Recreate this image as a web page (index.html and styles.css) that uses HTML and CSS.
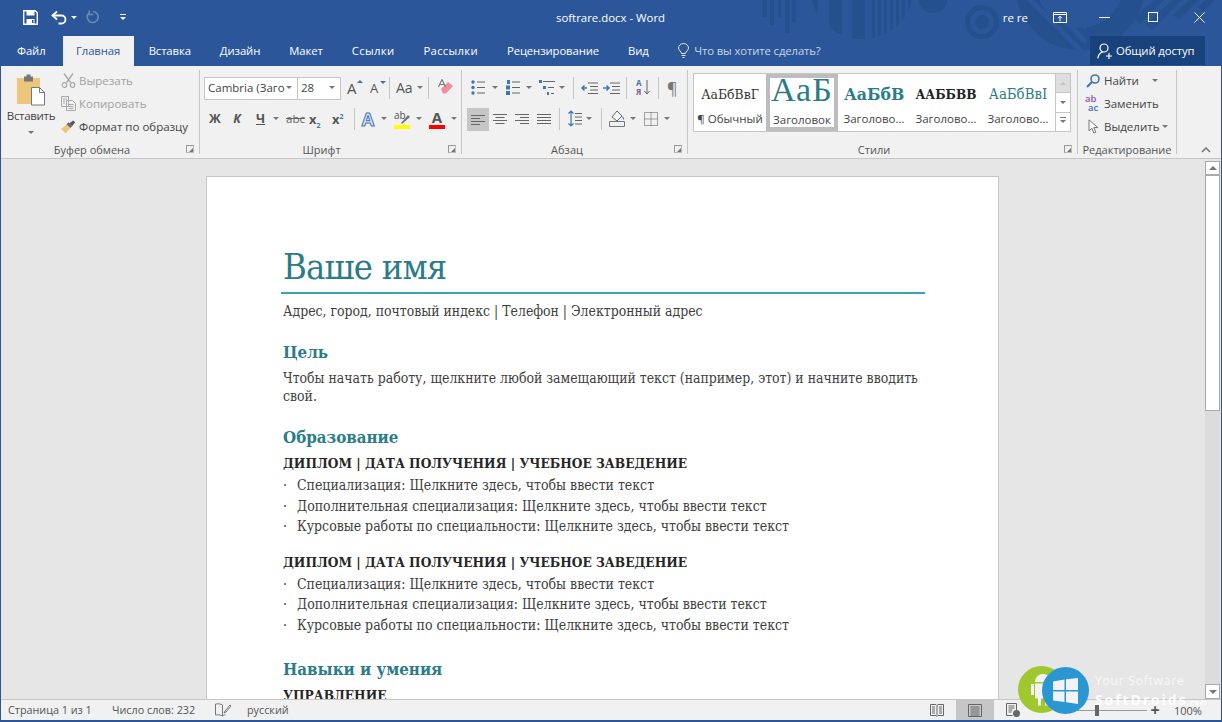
FILE: index.html
```html
<!DOCTYPE html>
<html lang="ru">
<head>
<meta charset="utf-8">
<title>softrare.docx - Word</title>
<link rel="stylesheet" href="styles.css">
</head>
<body>
<div class="window">
  <svg class="pattern" width="1222" height="66" viewBox="0 0 1222 66" aria-hidden="true">
    <defs>
      <clipPath id="semi"><circle cx="862" cy="-13" r="52"/></clipPath>
      <clipPath id="arcL"><path d="M1000 0H1086V66H1000Z"/></clipPath>
    </defs>
    <g fill="#25508e">
      <path d="M763 0h4v17h-4zM770 0h4v25h-4zM778 0h3v17h-3zM785 0h4v33h-4zM792 0h4v22h-4z"/>
      <g clip-path="url(#semi)">
        <path d="M811 0h7v20h-7zM829 0h13v40h-13zM852 0h13v40h-13zM872 0h3v40h-3zM878 0h3v40h-3zM884 0h3v40h-3zM890 0h3v40h-3zM896 0h3v40h-3zM902 0h3v40h-3zM908 0h3v40h-3z"/>
      </g>
      <path d="M919 0h28a14 13 0 0 1-28 0z"/>
      <path fill-rule="evenodd" d="M982 5a17 17 0 1 0 .01 0zM982 10a12 12 0 1 1-.01 0z"/>
      <circle cx="982" cy="22" r="7"/>
      <path d="M1155 0h9l-24 24-6-6zM1172 0h10l-30 30-6-6zM1190 0h9l-20 20-6-5zM1206 0h9l-12 12-5-5z"/>
    </g>
    <circle cx="1080" cy="-15" r="54" fill="none" stroke="#25508e" stroke-width="22"/>
    <g clip-path="url(#arcL)" stroke="#2b579a" stroke-width="5">
      <path d="M1020 -10l60 60M1034 -10l60 60M1048 -10l52 52"/>
    </g>
  </svg>

  <header class="titlebar">
    <div class="qat">
      <svg class="ic-save" width="15" height="15" viewBox="0 0 15 15"><path d="M0.7 0.7h11.6l2 2v11.6h-13.6z" fill="none" stroke="#fff" stroke-width="1.4"/><path d="M3.5 1h8v4.5h-8z" fill="#fff"/><path d="M3.5 9h8v5h-8z" fill="#fff"/><path d="M9 10h1.5v3h-1.5z" fill="#2b579a"/></svg>
      <svg class="ic-undo" width="16" height="15" viewBox="0 0 16 15"><path d="M1.5 5.5h9a4 4 0 0 1 0 8h-3" fill="none" stroke="#fff" stroke-width="1.8"/><path d="M6 1.5l-4.5 4 4.5 4" fill="none" stroke="#fff" stroke-width="1.8"/></svg>
      <span class="caret white ml-qat1"></span>
      <svg class="ic-redo" width="14" height="14" viewBox="0 0 14 14"><path d="M3.2 2.8a5.5 5.5 0 1 0 3.8-1.3" fill="none" stroke="#6d8bb9" stroke-width="1.6"/><path d="M3.2 0.5v4h4" fill="none" stroke="#6d8bb9" stroke-width="1.5"/></svg>
      <span class="qat-more"></span>
    </div>
    <div class="doc-title">softrare.docx - Word</div>
    <div class="winctl">
      <span class="user">re re</span>
      <svg class="ic-mode" width="14" height="11" viewBox="0 0 14 11"><path d="M.5.5h13v10H.5zM.5 2.5h13M7 9.5V4.5M5 6.2l2-2 2 2" fill="none" stroke="#fff"/></svg>
      <span class="ctl-min"></span>
      <span class="ctl-max"></span>
      <svg class="ctl-close" width="11" height="11" viewBox="0 0 11 11"><path d="M.5.5l10 10M10.500.5l-10 10" stroke="#fff" fill="none"/></svg>
    </div>
  </header>

  <nav class="tabs">
    <span class="tab t-file">Файл</span>
    <span class="tab active">Главная</span>
    <span class="tab t-ins">Вставка</span>
    <span class="tab">Дизайн</span>
    <span class="tab">Макет</span>
    <span class="tab t-wide">Ссылки</span>
    <span class="tab t-wider">Рассылки</span>
    <span class="tab">Рецензирование</span>
    <span class="tab">Вид</span>
    <svg class="ic-bulb" width="11" height="15" viewBox="0 0 11 15"><path d="M3.500 10.500c0-2-3-3-3-5.500a5 4.500 0 0 1 10 0c0 2.500-3 3.500-3 5.500zM3.500 12.500h4M4.500 14.500h2" fill="none" stroke="#dfe6f1"/></svg>
    <span class="tell">Что вы хотите сделать?</span>
    <span class="share">
      <svg width="16" height="16" viewBox="0 0 16 16"><circle cx="7" cy="5" r="4" fill="none" stroke="#fff" stroke-width="1.2"/><path d="M.8 15.500c.5-4 2.500-6 5-6.500M9 13h6M12 10v6" fill="none" stroke="#fff" stroke-width="1.2"/></svg>
      Общий доступ
    </span>
  </nav>

  <section class="ribbon">
    <div class="group g-clip">
      <div class="clip-body">
        <div class="paste">
          <svg width="30" height="32" viewBox="0 0 30 32"><path d="M1 4h23v26H1z" fill="#ecc67b"/><path d="M8 2.500h9v5H8z" fill="#777"/><path d="M10.500 .5h4v3h-4z" fill="#777"/><path d="M15.500 13.500h8l5 5v12.500h-13z" fill="#fff" stroke="#777"/><path d="M23.500 13.500v5h5" fill="none" stroke="#777"/></svg>
          <span class="paste-text">Вставить</span>
          <span class="caret"></span>
        </div>
        <div class="clip-list">
          <div class="clip-row dim">
            <svg width="15" height="15" viewBox="0 0 15 15"><path d="M3 .5l6.500 9M12 .5l-6.500 9" stroke="#a9a9a9" stroke-width="1.300" fill="none"/><circle cx="3.500" cy="12" r="2.300" fill="none" stroke="#a9a9a9" stroke-width="1.200"/><circle cx="11.500" cy="12" r="2.300" fill="none" stroke="#a9a9a9" stroke-width="1.200"/></svg>
            <span>Вырезать</span>
          </div>
          <div class="clip-row dim">
            <svg width="15" height="15" viewBox="0 0 15 15"><path d="M.5.500h7v10h-7zM5.500 4.500h6l3 3v7h-9zM2 3h4M2 5h2M2 7h2M7.500 8.500h5M7.500 10.500h5M7.500 12.500h5" fill="#f1f1f1" stroke="#a9a9a9"/></svg>
            <span>Копировать</span>
          </div>
          <div class="clip-row">
            <svg width="15" height="14" viewBox="0 0 16 14"><path d="M0 9l6-5 4 4-5 6z" fill="#ecc67b"/><path d="M6 4l2-2 4 4-2 2z" fill="#666"/><path d="M9 3l4-3 2 2-3 4z" fill="#555"/></svg>
            <span>Формат по образцу</span>
          </div>
        </div>
      </div>
      <div class="glabel gl-clip">Буфер обмена</div>
      <span class="launcher"></span>
    </div>

    <div class="group g-font">
      <div class="row r1">
        <span class="combo c-font">Cambria (Заго<span class="caret"></span></span><span class="combo c-size">28<span class="caret"></span></span>
        <span class="letter big m-a1">A<i class="up"></i></span>
        <span class="letter small-a m-a2">A<i class="down"></i></span>
        <span class="sep m-s1"></span>
        <span class="aa">Aa</span><span class="caret m4"></span>
        <span class="sep m-s2"></span>
        <svg class="m-er" width="16" height="17" viewBox="0 0 16 17"><path d="M3 10l7-7 5 4-7 7.500H5z" fill="#ef8e9f"/><path d="M.5 8L4 .5 7.500 8M1.800 5.500h4.500" fill="none" stroke="#777" stroke-width="1.100"/></svg>
      </div>
      <div class="row r2">
        <span class="fmt f-b">Ж</span>
        <span class="fmt f-i">К</span>
        <span class="fmt f-u">Ч</span><span class="caret m-car1"></span>
        <span class="abc">abc</span>
        <span class="scr m-x1">x<sub>2</sub></span>
        <span class="scr m-x2">x<sup>2</sup></span>
        <span class="sep m-s3"></span>
        <span class="effect">A</span><span class="caret m5"></span>
        <span class="hl">
          <svg width="16" height="17" viewBox="0 0 16 17"><path d="M7 11l7-8 2 2-8 7z" fill="#777"/><rect y="13" width="16" height="4" fill="#ffff00"/></svg>
          <b>ab</b>
        </span><span class="caret m-car2"></span>
        <span class="color">A<i></i></span><span class="caret m-car3"></span>
      </div>
      <div class="glabel gl-font">Шрифт</div>
      <span class="launcher"></span>
    </div>

    <div class="group g-para">
      <div class="row r1">
        <svg class="m-p1" width="14" height="15" viewBox="0 0 14 15"><g fill="#3f75b5"><circle cx="2" cy="2" r="1.700"/><circle cx="2" cy="7.500" r="1.700"/><circle cx="2" cy="13" r="1.700"/></g><path d="M6 2h8M6 7.500h8M6 13h8" stroke="#666"/></svg>
        <span class="caret m-p2"></span>
        <svg class="m-p3" width="14" height="15" viewBox="0 0 14 15"><g fill="#3f75b5"><rect x="1" y="0" width="3" height="4"/><rect x="0" y="5.500" width="4" height="4"/><rect x="0" y="11" width="4" height="4"/></g><path d="M6 2h8M6 7.500h8M6 13h8" stroke="#666"/></svg>
        <span class="caret m-p4"></span>
        <svg class="m-p5" width="16" height="15" viewBox="0 0 16 15"><g fill="#3f75b5"><rect x="0" y="0" width="3" height="3"/><rect x="4" y="6" width="3" height="3"/><rect x="8" y="12" width="2" height="3"/></g><path d="M4 1.500h12M9 7.500h6M12 13.500h3" stroke="#666"/></svg>
        <span class="caret m-p6"></span>
        <span class="sep m-p7"></span>
        <svg class="m-p8" width="17" height="14" viewBox="0 0 17 14"><path d="M7 2h10M9 5.500h8M9 9h8M7 12.500h10" stroke="#666"/><path d="M6 7H1M3.500 4.500L1 7l2.500 2.500" stroke="#3f75b5" stroke-width="1.500" fill="none"/></svg>
        <svg class="m-p9" width="17" height="14" viewBox="0 0 17 14"><path d="M7 2h10M9 5.500h8M9 9h8M7 12.500h10" stroke="#666"/><path d="M0 7h6M3.500 4.500L6 7 3.500 9.500" stroke="#3f75b5" stroke-width="1.500" fill="none"/></svg>
        <span class="sep m-p10"></span>
        <span class="sort m-p11"><b class="sort-a">А</b><b class="sort-y">Я</b>
          <svg width="6" height="15" viewBox="0 0 6 15"><path d="M3 0v14M.5 11L3 14l2.500-3" fill="none" stroke="#666"/></svg>
        </span>
        <span class="sep m-p12"></span>
        <span class="pil">¶</span>
      </div>
      <div class="row r2">
        <span class="al-sel">
          <svg width="14" height="10" viewBox="0 0 14 10"><path d="M0 .5h14M0 3.500h9M0 6.500h14M0 9.500h9" stroke="#666"/></svg>
        </span>
        <svg class="m-al1" width="14" height="10" viewBox="0 0 14 10"><path d="M0 .5h14M2.500 3.500h9M0 6.500h14M2.500 9.500h9" stroke="#666"/></svg>
        <svg class="m-al2" width="14" height="10" viewBox="0 0 14 10"><path d="M0 .5h14M5 3.500h9M0 6.500h14M5 9.500h9" stroke="#666"/></svg>
        <svg class="m-al2" width="14" height="10" viewBox="0 0 14 10"><path d="M0 .5h14M0 3.500h14M0 6.500h14M0 9.500h14" stroke="#666"/></svg>
        <span class="sep m-al3"></span>
        <svg class="m-al4" width="14" height="17" viewBox="0 0 14 17"><path d="M3 1v15M.5 3.500L3 1l2.500 2.500M.5 13.500L3 16l2.500-2.500" fill="none" stroke="#3f75b5" stroke-width="1.200"/><path d="M7 3.500h7M7 7h7M7 10.500h7M7 14h7" stroke="#666"/></svg>
        <span class="caret m-al5"></span>
        <span class="sep m-al6"></span>
        <svg class="m-al7" width="16" height="17" viewBox="0 0 16 17"><path d="M3 7l5-6 5 5-5 5z" fill="#f6f6f6" stroke="#666"/><path d="M13 6c2 1 2.500 3 2 4-1-1-1.500-2-2-4z" fill="#3f75b5"/><path d="M.5 11.500h15v5H.5z" fill="none" stroke="#777"/></svg>
        <span class="caret m-al8"></span>
        <svg class="m-al9" width="14" height="14" viewBox="0 0 14 14"><path d="M.5.500h13v13H.5zM7 .5v13M.5 7h13" fill="none" stroke="#555" stroke-dasharray="1 1"/></svg>
        <span class="caret m-al10"></span>
      </div>
      <div class="glabel gl-para">Абзац</div>
      <span class="launcher"></span>
    </div>

    <div class="group g-styles">
      <div class="gallery-wrap">
        <div class="gallery">
          <div class="style s-normal"><span class="sample">АаБбВвГ</span><span class="sname">¶ Обычный</span></div>
          <div class="style s-title"><span class="sample">АаБ</span><span class="sname">Заголовок</span></div>
          <div class="style s-h1"><span class="sample">АаБбВв</span><span class="sname">Заголово...</span></div>
          <div class="style s-h2"><span class="sample">ААББВВ</span><span class="sname">Заголово...</span></div>
          <div class="style s-h3"><span class="sample">АаБбВвI</span><span class="sname">Заголово...</span></div>
        </div>
        <div class="gal-scroll">
          <span class="gs-up"><i></i></span>
          <span class="gs-down"><i></i></span>
          <span class="gs-more"><i></i></span>
        </div>
      </div>
      <div class="glabel gl-styles">Стили</div>
      <span class="launcher"></span>
    </div>

    <div class="group g-edit">
      <div class="edit-list">
        <div class="edit-row">
          <svg width="14" height="14" viewBox="0 0 14 14"><circle cx="9" cy="5" r="4" fill="none" stroke="#3f75b5" stroke-width="1.600"/><path d="M6 8l-5 5" stroke="#3f75b5" stroke-width="2.200"/></svg>
          <span>Найти</span><span class="caret m-e1"></span>
        </div>
        <div class="edit-row">
          <span class="ab"><b class="ab1">ab</b><b class="ab2">ac</b></span>
          <span>Заменить</span>
        </div>
        <div class="edit-row">
          <svg class="m-e3" width="11" height="15" viewBox="0 0 11 15"><path d="M1 .8v11l2.800-2.600 2 4.800 2-.8-2-4.600h4z" fill="#fff" stroke="#777"/></svg>
          <span>Выделить</span><span class="caret m-e2"></span>
        </div>
      </div>
      <div class="glabel">Редактирование</div>
    </div>

    <svg class="collapse" width="10" height="6" viewBox="0 0 10 6"><path d="M1 5l4-4 4 4" fill="none" stroke="#777" stroke-width="1.500"/></svg>
  </section>

  <main class="workspace">
    <div class="canvas">
      <article class="page">
        <h1 class="name">Ваше имя</h1>
        <p class="contact">Адрес, город, почтовый индекс | Телефон | Электронный адрес</p>
        <h2 class="h-goal">Цель</h2>
        <p class="body">Чтобы начать работу, щелкните любой замещающий текст (например, этот) и начните вводить свой.</p>
        <h2 class="h-edu">Образование</h2>
        <h3>ДИПЛОМ | ДАТА ПОЛУЧЕНИЯ | УЧЕБНОЕ ЗАВЕДЕНИЕ</h3>
        <ul>
          <li>Специализация: Щелкните здесь, чтобы ввести текст</li>
          <li>Дополнительная специализация: Щелкните здесь, чтобы ввести текст</li>
          <li>Курсовые работы по специальности: Щелкните здесь, чтобы ввести текст</li>
        </ul>
        <h3 class="second">ДИПЛОМ | ДАТА ПОЛУЧЕНИЯ | УЧЕБНОЕ ЗАВЕДЕНИЕ</h3>
        <ul>
          <li>Специализация: Щелкните здесь, чтобы ввести текст</li>
          <li>Дополнительная специализация: Щелкните здесь, чтобы ввести текст</li>
          <li>Курсовые работы по специальности: Щелкните здесь, чтобы ввести текст</li>
        </ul>
        <h2 class="h-skills">Навыки и умения</h2>
        <h3 class="mgmt">УПРАВЛЕНИЕ</h3>
      </article>
    </div>
    <div class="scrollbar">
      <span class="sb-up"><i></i></span>
      <span class="sb-thumb"></span>
      <span class="sb-down"><i></i></span>
    </div>
  </main>

  <footer class="status">
    <span class="st-page">Страница 1 из 1</span>
    <span class="st-words">Число слов: 232</span>
    <svg class="st-proof" width="16" height="14" viewBox="0 0 16 14"><path d="M7.500 2C6 1 3 .5.500 1v11c2.500-.5 5.500 0 7 1 .5-.5 1.500-1 3-1.200M7.500 2v11" fill="none" stroke="#777"/><path d="M10 8l5-6 1 1-5 6-2 1z" fill="none" stroke="#777"/></svg>
    <span class="st-lang">русский</span>
    <svg class="st-read" width="14" height="13" viewBox="0 0 14 13"><path d="M.5.500h5.500l1 1 1-1h5.500v11h-5.500l-1 1-1-1H.5zM7 1.500v10M2 3h3M2 5h3M2 7h3M2 9h3M9 3h3M9 5h3M9 7h3M9 9h3" fill="none" stroke="#666"/></svg>
    <span class="st-print"><svg width="14" height="13" viewBox="0 0 14 13"><path d="M.5.500h13v12H.5zM2.500 3h9M2.500 5h9M2.500 7h9M2.500 9h9M2.500 11h9" fill="none" stroke="#666"/></svg></span>
    <svg class="st-web" width="14" height="14" viewBox="0 0 14 14"><path d="M.5.500h10v9M.5.500v12h6M2.500 3h6M2.500 5h6M2.500 7h4M2.500 9h3" fill="none" stroke="#666"/><circle cx="10.500" cy="10.500" r="3.500" fill="#666"/></svg>
    <span class="st-minus"></span>
    <span class="slider"><i></i></span>
    <span class="st-plus">+</span>
    <span class="st-zoom">100%</span>
  </footer>

  <div class="watermark" aria-label="SoftDroids">
    <span class="wm-green">
      <svg width="24" height="36" viewBox="0 0 24 36"><path d="M4 10a8 8 0 0 1 16 0z" fill="#f3f3f3"/><path d="M4 11.500h16v15h-3v7h-3v-7h-4v7H7v-7H4z" fill="#f3f3f3"/><path d="M0 12h3v11H0zM21 12h3v11h-3z" fill="#f3f3f3"/></svg>
    </span>
    <span class="wm-blue">
      <svg width="25" height="26" viewBox="0 0 25 26"><path d="M0 3.500l11.500-2v10.500H0zM13 1.200L25 0v12H13zM0 13.500h11.500V24L0 22.500zM13 13.500h12V26l-12-1.800z" fill="#f2f3fb"/></svg>
    </span>
    <span class="wm-text"><span class="wm-1">Your Software</span><span class="wm-2">SoftDroids<small>.com</small></span></span>
  </div>
</div>
</body>
</html>
```

FILE: styles.css
```css
* { box-sizing: border-box; }
html, body { margin: 0; padding: 0; }
body { width: 1222px; height: 722px; overflow: hidden; font-family: "Open Sans", "Noto Sans", sans-serif; background: #2b579a; }
.window { position: relative; width: 1222px; height: 721px; border: 1px solid #2b579a; border-top: 0; display: flex; flex-direction: column; overflow: hidden; background: #2b579a; }
.pattern { position: absolute; left: -1px; top: 0; }

/* title bar */
.titlebar { position: relative; height: 36px; display: flex; align-items: center; padding-bottom: 2px; color: #fff; flex: none; }
.qat { display: flex; align-items: center; width: 467px; padding-left: 22px; }
.ic-undo { margin-left: 13px; }
.ml-qat1 { margin-left: 4px; }
.ic-redo { margin-left: 9px; }
.qat-more { width: 6px; height: 6px; margin-left: 20px; border-top: 1px solid #fff; position: relative; }
.qat-more::after { content: ""; position: absolute; left: 0; top: 2px; border: 3px solid transparent; border-top-color: #fff; }
.doc-title { width: 180px; text-align: center; font-size: 11.400px; padding-left: 88px; white-space: nowrap; margin-left: 0; }
.winctl { margin-left: auto; display: flex; align-items: center; }
.user { font-size: 11.500px; margin-right: 25px; }
.ic-mode { margin-right: 32px; }
.ctl-min { width: 11px; height: 1px; background: #fff; margin-right: 38px; }
.ctl-max { width: 10px; height: 10px; border: 1px solid #fff; margin-right: 36px; }
.ctl-close { margin-right: 16px; }

/* tabs */
.tabs { position: relative; height: 30px; flex: none; display: flex; align-items: stretch; color: #fff; font-size: 11.300px; letter-spacing: -.1px; }
.tab { padding: 0 14.500px; line-height: 30px; white-space: nowrap; }
.t-file { padding: 0 17px 0 16px; }
.tab.active { background: #f1f1f1; color: #2b579a; padding: 0 13.500px; }
.t-ins { padding-left: 15px; }
.t-wide { letter-spacing: .35px; }
.t-wider { letter-spacing: .3px; }
.ic-bulb { margin: 7px 0 0 15px; }
.tell { margin-left: 5px; line-height: 30px; color: #c9d5e8; }
.share { position: absolute; right: 16px; top: 0; width: 115px; height: 29px; background: #17427b; display: flex; align-items: center; padding-left: 7px; gap: 3px; white-space: nowrap; }

/* ribbon */
.ribbon { position: relative; height: 93px; flex: none; background: #f1f1f1; border-bottom: 1px solid #c6c6c6; padding-top: 4px; display: flex; color: #444; font-size: 11.500px; }
.group { position: relative; height: 84px; border-right: 1px solid #c6c6c6; display: flex; flex-direction: column; flex: none; }
.g-clip { width: 199px; }
.g-font { width: 262px; padding: 7px 0 0 4px; }
.g-para { width: 226px; padding: 7px 0 0 5px; }
.g-styles { width: 390px; padding: 3px 0 0 5px; }
.g-edit { width: 99px; }
.glabel { margin-top: auto; margin-bottom: -2px; height: 12px; line-height: 12px; text-align: center; font-size: 11px; color: #555; white-space: nowrap; }
.gl-clip { padding-right: 16px; }
.gl-font { padding-right: 22px; }
.gl-para { padding-right: 20px; }
.gl-styles { padding-right: 22px; }
.launcher { position: absolute; right: 5px; bottom: 1px; width: 8px; height: 8px; border: 1px solid #999; border-right-color: #bbb; border-bottom-color: #bbb; }
.launcher::after { content: ""; position: absolute; right: 0; bottom: 0; width: 0; height: 0; border-style: solid; border-width: 0 0 4px 4px; border-color: transparent transparent #777 transparent; }
.caret { display: inline-block; width: 0; height: 0; flex: none; border: 3px solid transparent; border-top: 3px solid #777; border-bottom: 0; }
.caret.white { border-top-color: #fff; }

/* clipboard */
.clip-body { display: flex; }
.paste { width: 54px; margin-left: 3px; display: flex; flex-direction: column; align-items: center; padding-top: 4px; }
.paste-text { margin-top: 2px; line-height: 16px; white-space: nowrap; letter-spacing: -.3px; }
.paste .caret { margin-top: 7px; }
.clip-list { margin: -1px 0 0 3px; }
.clip-row { height: 23px; display: flex; align-items: center; gap: 3px; white-space: nowrap; }
.clip-row.dim { color: #a2a2a2; }

/* rows */
.row { display: flex; align-items: center; height: 23px; padding-bottom: 2px; flex: none; }
.r2 { margin-top: 8px; }
.combo { height: 23px; margin-bottom: -2px; background: #fff; border: 1px solid #c6c6c6; display: flex; align-items: center; justify-content: space-between; padding: 0 5px 2px 3px; font-size: 11.500px; color: #444; white-space: nowrap; }
.c-font { width: 94px; }
.c-size { width: 44px; margin-left: -1px; }
.sep { width: 1px; height: 22px; background: #c6c6c6; flex: none; }
.letter { position: relative; color: #555; font-weight: 400; width: 14px; }
.big { font-size: 15px; }
.small-a { font-size: 13px; }
.letter i { position: absolute; right: -2px; top: 2px; border: 3px solid transparent; }
.letter .up { border-top: 0; border-bottom: 3px solid #3f75b5; }
.letter .down { border-bottom: 0; border-top: 3px solid #3f75b5; }
.m-a1 { margin-left: 6px; }
.m-a2 { margin-left: 9px; }
.m-s1 { margin-left: 5px; }
.aa { margin-left: 6px; font-size: 14px; color: #555; }
.m4 { margin-left: 4px; }
.m5 { margin-left: 5px; }
.m-s2 { margin-left: 5px; }
.m-er { margin-left: 9px; }
.fmt { font-size: 12.500px; font-weight: 700; color: #555; width: 14px; text-align: center; }
.f-b { margin-left: 4px; }
.f-i { margin-left: 8px; font-style: italic; }
.f-u { margin-left: 11px; text-decoration: underline; width: 11px; }
.m-car1 { margin-left: 7px; }
.abc { margin-left: 7px; font-size: 11.500px; color: #666; text-decoration: line-through; width: 18px; }
.scr { font-size: 13px; font-weight: 700; color: #555; width: 15px; white-space: nowrap; }
.scr sub, .scr sup { font-size: 7px; line-height: 0; color: #3f75b5; }
.m-x1 { margin-left: 5px; }
.m-x2 { margin-left: 8px; }
.m-s3 { margin-left: 7px; }
.effect { margin-left: 5px; width: 16px; font-size: 18px; font-weight: 700; line-height: 20px; color: #dfe9f6; -webkit-text-stroke: 1px #3f75b5; text-align: center; }
.hl { position: relative; margin-left: 7px; width: 16px; height: 20px; display: block; }
.hl svg { position: absolute; left: 0; top: 3px; }
.hl b { position: absolute; left: 0; top: 0; font-size: 10px; line-height: 12px; font-weight: 400; color: #555; }
.m-car2 { margin-left: 6px; }
.color { position: relative; margin-left: 7px; width: 16px; height: 20px; font-size: 15px; line-height: 16px; font-weight: 700; text-align: center; color: #555; }
.color i { position: absolute; left: 0; bottom: 0; width: 16px; height: 4px; background: #f00; }
.m-car3 { margin-left: 6px; }

/* paragraph */
.g-para .r1 { padding-left: 4px; }
.m-p2 { margin-left: 7px; }
.m-p3 { margin-left: 8px; }
.m-p4 { margin-left: 6px; }
.m-p5 { margin-left: 7px; }
.m-p6 { margin-left: 4px; }
.m-p7 { margin-left: 8px; }
.m-p8 { margin-left: 7px; }
.m-p9 { margin-left: 5px; }
.m-p10 { margin-left: 6px; }
.m-p11 { margin-left: 9px; }
.m-p12 { margin-left: 8px; }
.sort { position: relative; width: 14px; height: 17px; display: block; }
.sort svg { position: absolute; right: 0; top: 1px; }
.sort b { position: absolute; left: 0; font-size: 8px; line-height: 8px; font-weight: 700; }
.sort-a { top: 0; color: #3f75b5; }
.sort-y { top: 9px; color: #8a5aa8; }
.pil { margin-left: 8px; font-size: 16px; color: #777; }
.al-sel { width: 22px; height: 23px; margin-bottom: -2px; background: #c6c6c6; display: flex; align-items: center; justify-content: center; }
.m-al1 { margin-left: 4px; }
.m-al2 { margin-left: 8px; }
.m-al3 { margin-left: 8px; }
.m-al4 { margin-left: 8px; }
.m-al5 { margin-left: 4px; }
.m-al6 { margin-left: 9px; }
.m-al7 { margin-left: 7px; }
.m-al8 { margin-left: 5px; }
.m-al9 { margin-left: 8px; }
.m-al10 { margin-left: 6px; }

/* styles gallery */
.gallery-wrap { display: flex; height: 59px; }
.gallery { width: 363px; height: 59px; background: #fff; border: 1px solid #c6c6c6; display: flex; }
.style { width: 72px; height: 57px; display: flex; flex-direction: column; align-items: center; overflow: hidden; flex: none; }
.sample { height: 37px; padding-top: 3px; display: block; line-height: 34px; white-space: nowrap; overflow: hidden; font-family: "DejaVu Serif Condensed", "DejaVu Serif", serif; }
.sname { font-size: 11.500px; line-height: 16px; color: #444; white-space: nowrap; }
.s-normal .sample { font-size: 13.800px; color: #333; }
.s-title { border: 4px solid #bdbdbd; }
.s-title .sample { height: 35px; padding: 0; line-height: 24px; overflow: visible; font-size: 34px; letter-spacing: 1px; color: #2a7c87; font-family: "Liberation Serif", serif; width: 62px; }
.s-title .sname { line-height: 14px; }
.s-h1 .sample { font-size: 17.500px; font-weight: 700; color: #2a7c87; width: 60px; }
.s-h2 .sample { font-size: 13.500px; font-weight: 700; color: #222; }
.s-h3 .sample { font-size: 14.800px; color: #2a7c87; }
.gal-scroll { width: 15px; margin-left: 0; display: flex; flex-direction: column; border: 1px solid #c6c6c6; border-left: 0; height: 59px; background: #fff; }
.gal-scroll span { display: flex; align-items: center; justify-content: center; flex: 1; border-bottom: 1px solid #c6c6c6; }
.gal-scroll span:last-child { border-bottom: 0; }
.gs-up { background: #dedede; }
.gs-up i { border: 3px solid transparent; border-top: 0; border-bottom: 3px solid #c0c0c0; }
.gs-down i { border: 3px solid transparent; border-bottom: 0; border-top: 3px solid #777; }
.gs-more i { border: 3px solid transparent; border-bottom: 0; border-top: 3px solid #777; position: relative; }
.gs-more i::before { content: ""; position: absolute; left: -3px; top: -6px; width: 6px; height: 1px; background: #777; }

/* editing */
.edit-list { padding: 0 0 0 8px; margin-top: -1px; }
.edit-row { height: 23px; display: flex; align-items: center; gap: 4px; white-space: nowrap; }
.m-e1 { margin-left: 9px; }
.m-e2 { margin-left: -1px; }
.m-e3 { margin: 0 1px 0 2px; }
.ab { position: relative; width: 14px; height: 18px; display: block; }
.ab b { position: absolute; font-size: 9.500px; line-height: 8px; font-weight: 600; }
.ab1 { left: -1px; top: 0; color: #8a5aa8; }
.ab2 { left: 2px; top: 9px; color: #3f75b5; }
.collapse { position: absolute; right: 10px; top: 81px; }

/* document */
.workspace { flex: 1; min-height: 0; display: flex; background: #e6e6e6; }
.canvas { flex: 1; min-width: 0; overflow: hidden; padding: 17px 0 0 205px; }
.page { width: 793px; height: 700px; background: #fff; border: 1px solid #c6c6c6; padding: 0 73px 0 76px; font-family: "DejaVu Serif Condensed", "DejaVu Serif", serif; color: #404040; font-size: 13.900px; line-height: 18px; }
.page h1, .page h2, .page h3, .page p, .page ul { margin: 0; padding: 0; list-style: none; }
.name { font-size: 36px; letter-spacing: -.8px; line-height: 44px; font-weight: 400; color: #2a7c87; margin-top: 68px !important; }
.contact { border-top: 2px solid #3aa3b3; margin: 3px 0 0 -2px !important; padding: 8px 0 0 2px !important; }
.page h2 { font-size: 16.800px; line-height: 22px; font-weight: 700; color: #2a7c87; }
.h-goal { margin-top: 21px !important; }
.body { margin-top: 6px !important; }
.h-edu { margin-top: 21px !important; }
.page h3 { font-size: 13.600px; line-height: 18px; font-weight: 700; color: #262626; margin-top: 6px; }
.page li { font-size: 13.950px; line-height: 20.500px; padding-left: 14px; position: relative; }
.page li::before { content: "·"; position: absolute; left: 0; }
.page ul { margin-top: 3px; }
.page h3.second { margin-top: 16px; }
.h-skills { margin-top: 23px !important; }
.page h3.mgmt { margin-top: 6px; }

/* scrollbar */
.scrollbar { width: 15px; flex: none; background: #dcdcdc content-box; display: flex; flex-direction: column; margin-right: 1px; padding-top: 2px; }
.scrollbar span { display: block; width: 15px; background: #fff; border: 1px solid #aaa; flex: none; }
.sb-up { height: 15px; display: flex !important; align-items: center; justify-content: center; border-bottom-width: 2px !important; }
.sb-up i { border: 4px solid transparent; border-top: 0; border-bottom: 4px solid #777; }
.sb-thumb { height: 235px; border-top: 0 !important; }
.sb-down { margin-top: auto; height: 15px; display: flex !important; align-items: center; justify-content: center; }
.sb-down i { border: 4px solid transparent; border-bottom: 0; border-top: 4px solid #777; }

/* status */
.status { position: relative; height: 21px; flex: none; background: #f1f1f1; border-top: 1px solid #c6c6c6; display: flex; align-items: center; font-size: 10.800px; line-height: 12px; color: #555; white-space: nowrap; }
.st-page { margin-left: 7px; width: 104px; }
.st-words { width: 103px; }
.st-proof { margin-right: 16px; }
.st-lang { width: 683px; }
.st-read { flex: none; }
.st-print { margin-left: 12px; width: 38px; height: 20px; background: #c6c6c6; display: flex; align-items: center; justify-content: center; }
.st-web { margin-left: 12px; }
.st-minus { margin-left: 20px; width: 0; }
.slider { position: relative; margin-left: 20px; width: 87px; height: 1px; background: #999; }
.slider i { position: absolute; left: 35px; top: -5px; width: 4px; height: 11px; background: #666; }
.st-plus { margin-left: 1px; font-size: 16px; font-weight: 700; line-height: 8px; width: 14px; text-align: center; }
.st-zoom { margin-left: 12px; font-size: 11px; line-height: 9px; }

/* watermark */
.watermark { position: absolute; left: 1017px; top: 666px; width: 190px; height: 50px; }
.wm-green { position: absolute; left: 0; top: 0; width: 47px; height: 47px; border-radius: 50%; background: #a0c82e; display: flex; align-items: center; padding-left: 13px; }
.wm-blue { position: absolute; left: 24px; top: 1px; width: 47px; height: 47px; border-radius: 50%; background: #2a96d2; display: flex; align-items: center; justify-content: center; }
.wm-text { position: absolute; left: 77px; top: 7px; display: flex; flex-direction: column; color: rgba(255,255,255,.75); white-space: nowrap; }
.wm-1 { font-size: 12px; line-height: 15px; letter-spacing: .8px; }
.wm-2 { margin-top: 7px; font-size: 14px; line-height: 10px; font-weight: 700; letter-spacing: 1.900px; color: rgba(255,255,255,.9); }
.wm-2 small { font-size: 7px; letter-spacing: .8px; }
```
